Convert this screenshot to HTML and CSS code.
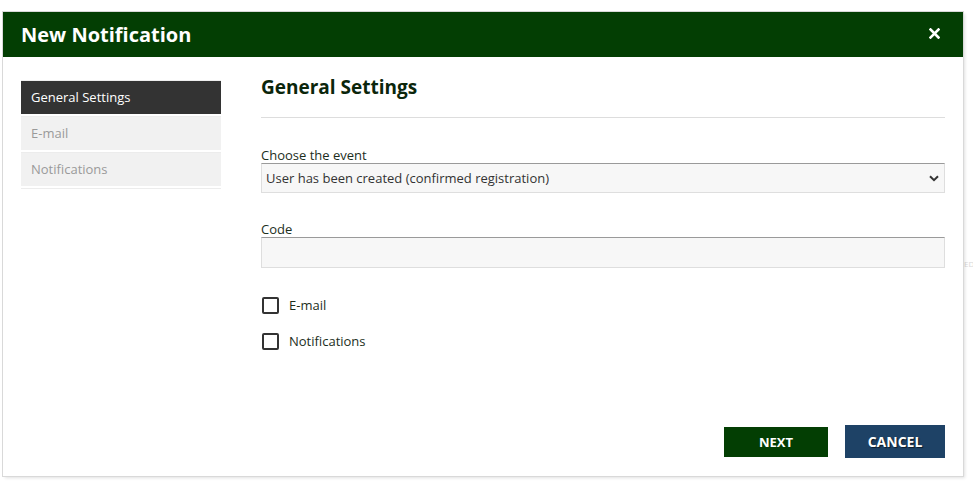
FILE: index.html
```html
<!DOCTYPE html>
<html>
<head>
<meta charset="utf-8">
<link rel="stylesheet" href="styles.css">
</head>
<body>
<div class="backdrop">
  <span class="bg-text">ED</span>
</div>
<div class="modal">
  <div class="modal-header">
    <h1 class="modal-title">New Notification</h1>
    <svg class="close" width="11" height="11" viewBox="0 0 11 11"><path d="M1.5 1.5 L9.5 9.5 M9.5 1.5 L1.5 9.5" stroke="#fff" stroke-width="2.6" stroke-linecap="square"/></svg>
  </div>
  <div class="modal-body">
    <ul class="sidenav">
      <li class="nav-item active">General Settings</li>
      <li class="nav-item">E-mail</li>
      <li class="nav-item">Notifications</li>
    </ul>
    <div class="content">
      <h2 class="section-title">General Settings</h2>
      <div class="field">
        <label class="field-label">Choose the event</label>
        <div class="select">
          <span>User has been created (confirmed registration)</span>
          <svg class="chev" width="10" height="7" viewBox="0 0 10 7"><path d="M1 1.2 L5 5.2 L9 1.2" fill="none" stroke="#333" stroke-width="2"/></svg>
        </div>
      </div>
      <div class="field">
        <label class="field-label">Code</label>
        <div class="input"></div>
      </div>
      <div class="checks">
        <div class="check"><span class="box"></span><span>E-mail</span></div>
        <div class="check"><span class="box"></span><span>Notifications</span></div>
      </div>
    </div>
  </div>
  <div class="modal-footer">
    <button class="btn btn-next">NEXT</button>
    <button class="btn btn-cancel">CANCEL</button>
  </div>
</div>
</body>
</html>
```
FILE: styles.css
```css
html, body {
  margin: 0;
  padding: 0;
  background: #fff;
  font-family: "Open Sans", "Liberation Sans", sans-serif;
}
body {
  width: 973px;
  height: 486px;
  overflow: hidden;
  position: relative;
}
.backdrop {
  position: absolute;
  inset: 0;
}
.bg-text {
  position: absolute;
  top: 258px;
  left: 964px;
  font-size: 8px;
  color: #d8d8d8;
}
.modal {
  position: absolute;
  left: 3px;
  top: 12px;
  width: 960px;
  height: 464px;
  background: #fff;
  box-shadow: 0 0 0 1px #d9d9d9, 2px 2px 3px rgba(0,0,0,0.12);
  display: flex;
  flex-direction: column;
}
.modal-header {
  height: 45px;
  background: #033e03;
  display: flex;
  align-items: center;
  justify-content: space-between;
  padding: 0 23px 0 18px;
}
.modal-title {
  margin: 0;
  margin-top: -1px;
  color: #fff;
  font-size: 20px;
  font-weight: 700;
}
.close {
  display: block;
  margin-top: -2px;
}
.modal-body {
  display: flex;
  padding: 23px 18px 0 18px;
  gap: 40px;
  flex: 1;
}
.sidenav {
  list-style: none;
  margin: 0;
  padding: 0;
  width: 200px;
  flex: none;
  border-top: 1px solid #eeeeee;
}
.nav-item {
  height: 33px;
  line-height: 32px;
  padding-left: 10px;
  font-size: 13px;
  color: #9a9a9a;
  background: #f1f1f1;
  border-bottom: 2px solid #fff;
  box-shadow: 0 1px 0 #ececec;
  margin-bottom: 1px;
}
.nav-item.active {
  background: #333333;
  color: #fff;
}
.content {
  flex: 1;
}
.section-title {
  margin: 0;
  margin-top: -5px;
  font-size: 19px;
  font-weight: 700;
  color: #0b260b;
  line-height: 24px;
  padding-bottom: 18px;
  border-bottom: 1px solid #dddddd;
}
.field {
  margin-top: 29px;
}
.field + .field {
  margin-top: 28px;
}
.field-label {
  display: block;
  font-size: 13px;
  color: #1c2e1c;
  line-height: 16px;
}
.select, .input {
  height: 28px;
  background: #f7f7f7;
  border: 1px solid #dedede;
  border-top: 1px solid #9a9a9a;
  display: flex;
  align-items: center;
  justify-content: space-between;
  padding: 0 4px;
  font-size: 13px;
  color: #333;
}
.input {
  height: 29px;
}
.chev {
  margin-right: 1px;
}
.checks {
  margin-top: 28px;
  display: flex;
  flex-direction: column;
  gap: 18px;
}
.check {
  display: flex;
  align-items: center;
  gap: 10px;
  font-size: 13px;
  color: #1c2e1c;
  height: 18px;
  padding-left: 1px;
}
.box {
  width: 13px;
  height: 13px;
  border: 2px solid #333;
  border-radius: 2px;
  display: inline-block;
}
.modal-footer {
  display: flex;
  justify-content: flex-end;
  align-items: center;
  gap: 17px;
  padding: 0 18px 18px 0;
}
.btn {
  border: none;
  color: #fff;
  font-family: "Open Sans", "Liberation Sans", sans-serif;
  font-weight: 700;
  font-size: 13px;
}
.btn-next {
  width: 104px;
  height: 30px;
  background: #033e03;
  margin-top: 1px;
}
.btn-cancel {
  width: 100px;
  height: 33px;
  background: #1e4266;
  font-size: 14px;
  text-shadow: 1px 1px 1px rgba(0,0,0,0.6);
}
```
